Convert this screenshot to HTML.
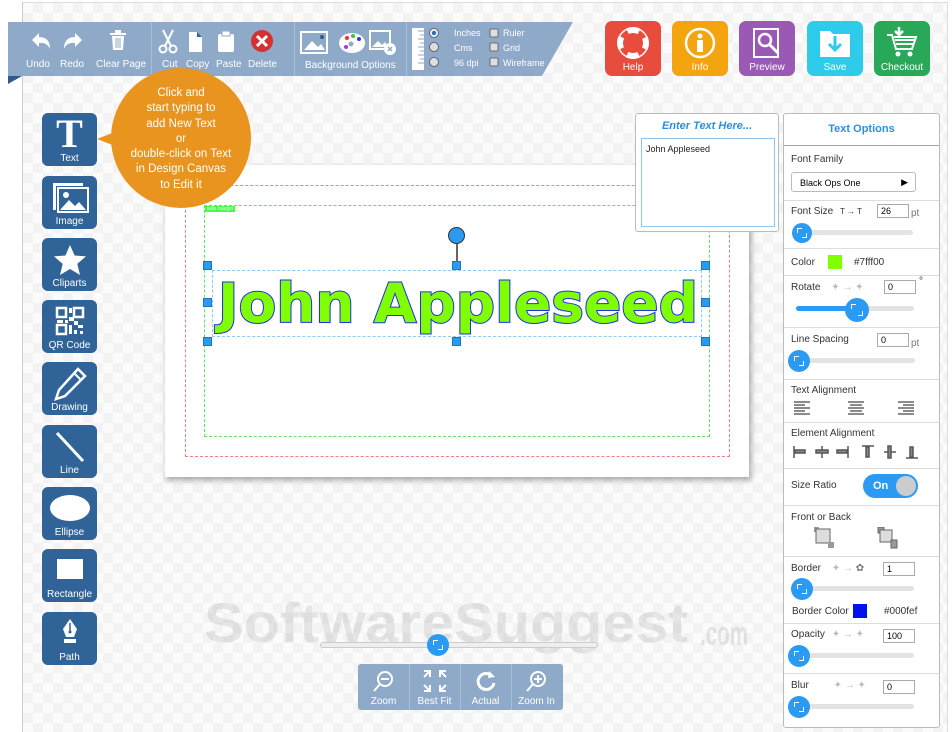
<!DOCTYPE html>
<html><head><meta charset="utf-8"><style>
*{box-sizing:border-box;margin:0;padding:0}
body{width:952px;height:724px;overflow:hidden;position:relative;font-family:"Liberation Sans",sans-serif;background:#fff}
.abs{position:absolute}
.bg{left:22px;top:2px;width:926px;height:730px;border-left:1px solid #ccc;border-top:1px solid #ddd;border-right:1px solid #ddd;
background-color:#f9f9f9;background-image:repeating-conic-gradient(#f3f3f3 0 25%,#fbfbfb 0 50%);background-size:20px 20px}
.tb{left:8px;top:22px;width:565px;height:54px;background:#8eaac8;clip-path:polygon(0 0,100% 0,94.5% 100%,0 100%)}
.tl{color:#fff;font-size:10px;position:absolute;text-align:center}
.sep{position:absolute;top:0;width:1px;height:54px;background:#a9bfd6}
.tool{position:absolute;left:42px;width:55px;height:53px;background:#306397;border-radius:6px;color:#fff;font-size:10px;text-align:center}
.tool span{position:absolute;left:0;right:0;bottom:2px}
.tool svg{position:absolute;left:50%;transform:translateX(-50%);top:5px}
.btn{position:absolute;top:21px;width:56px;height:55px;border-radius:7px;color:#fff;font-size:10px;text-align:center}
.btn span{position:absolute;left:0;right:0;bottom:3px}
.btn svg{position:absolute;left:50%;transform:translateX(-50%);top:6px}
.panel{left:783px;top:113px;width:157px;height:615px;background:#fff;border:1px solid #bbb;border-radius:3px}
.sec{position:absolute;left:0;width:155px;border-top:1px solid #ddd;font-size:10px;color:#333}
.lbl{position:absolute;left:7px;font-size:10px;color:#333}
.inp{position:absolute;width:32px;height:14px;border:1px solid #aaa;font-size:9px;padding-left:3px;line-height:12px;background:#fff}
.track{position:absolute;height:5px;background:#e3e3e3;border-radius:3px}
.knob{position:absolute;width:20px;height:20px;border-radius:50%;background:#2a9af2}
.knob:before{content:"";position:absolute;left:30%;top:30%;width:4px;height:4px;border-top:1.5px solid #fff;border-left:1.5px solid #fff;transform:translate(-1px,-1px)}
.knob:after{content:"";position:absolute;right:30%;bottom:30%;width:4px;height:4px;border-bottom:1.5px solid #fff;border-right:1.5px solid #fff;transform:translate(1px,1px)}
.h{position:absolute;width:9px;height:9px;background:#2a9af2;border:1px solid #2274b8}
</style></head><body>
<div class="abs bg"></div>

<!-- toolbar -->
<div class="abs" style="left:8px;top:76px;width:0;height:0;border-left:14px solid #2d5a8a;border-bottom:8px solid transparent"></div>
<div class="abs tb">
  <svg class="abs" style="left:20px;top:8px" width="80" height="24" viewBox="0 0 80 24"><path d="M4 10 L11 3 L11 7 Q22 7 22 19 Q19 12 11 13 L11 17 Z" fill="#fff"/><path d="M54 10 L47 3 L47 7 Q36 7 36 19 Q39 12 47 13 L47 17 Z" fill="#fff"/></svg>
  <svg class="abs" style="left:100px;top:6px" width="20" height="24"><rect x="2" y="5" width="16" height="2" fill="#fff"/><rect x="7" y="2" width="6" height="3" fill="#fff"/><path d="M4 8h12l-1 14H5z" fill="#fff"/><path d="M8 10v10M10 10v10M12 10v10" stroke="#8eaac8" stroke-width="1"/></svg>
  <div class="tl" style="left:18px;top:37px">Undo</div><div class="tl" style="left:52px;top:37px">Redo</div><div class="tl" style="left:88px;top:37px">Clear Page</div>
  <div class="sep" style="left:143px"></div>
  <svg class="abs" style="left:150px;top:6px" width="115" height="26"><g stroke="#fff" stroke-width="2" fill="none"><circle cx="5" cy="21" r="3.5"/><circle cx="15" cy="21" r="3.5"/><path d="M7 18L15 2M13 18L5 2"/></g>
  <path d="M31 4h8l5 5v15h-13z" fill="#fff"/><path d="M39 4v5h5" fill="#34659a"/>
  <rect x="60" y="6" width="16" height="18" rx="2" fill="#fff"/><rect x="64" y="3" width="8" height="5" fill="#fff" stroke="#8eaac8"/>
  <circle cx="104" cy="13" r="11" fill="#d63131"/><path d="M99 8l10 10M109 8l-10 10" stroke="#fff" stroke-width="3"/></svg>
  <div class="tl" style="left:154px;top:37px">Cut</div><div class="tl" style="left:178px;top:37px">Copy</div><div class="tl" style="left:208px;top:37px">Paste</div><div class="tl" style="left:240px;top:37px">Delete</div>
  <div class="sep" style="left:286px"></div>
  <svg class="abs" style="left:292px;top:8px" width="100" height="26"><rect x="1" y="2" width="26" height="21" fill="none" stroke="#fff" stroke-width="2"/><path d="M4 20l8-9 6 6 3-3 4 6z" fill="#fff"/><circle cx="22" cy="7" r="2" fill="#2d5a8a"/>
  <ellipse cx="52" cy="13" rx="13" ry="10" fill="#fff"/><circle cx="47" cy="8" r="2" fill="#e33"/><circle cx="53" cy="6" r="2" fill="#3c3"/><circle cx="59" cy="9" r="2" fill="#33e"/><circle cx="46" cy="17" r="2" fill="#a3e"/><circle cx="51" cy="14" r="2.5" fill="#8eaac8"/>
  <rect x="70" y="1" width="20" height="18" fill="none" stroke="#fff" stroke-width="2"/><path d="M72 17l6-6 4 4 3-3 3 5z" fill="#fff"/><circle cx="90" cy="19" r="6" fill="#fff"/><path d="M88 17l4 4M92 17l-4 4" stroke="#8eaac8" stroke-width="1.5"/></svg>
  <div class="tl" style="left:297px;top:38px">Background Options</div>
  <div class="sep" style="left:398px"></div>
  <svg class="abs" style="left:404px;top:6px" width="14" height="42"><rect x="0" y="0" width="12" height="42" fill="#fff"/><path d="M6 3h6M8 7h4M6 11h6M8 15h4M6 19h6M8 23h4M6 27h6M8 31h4M6 35h6" stroke="#8eaac8"/></svg>
  <svg class="abs" style="left:420px;top:5px" width="75" height="44"><g fill="#ddd" stroke="#555" stroke-width=".8"><circle cx="6" cy="6" r="4.5" fill="#eef"/><circle cx="6" cy="20" r="4.5"/><circle cx="6" cy="35" r="4.5"/><rect x="62" y="2" width="8" height="8" rx="1"/><rect x="62" y="16" width="8" height="8" rx="1"/><rect x="62" y="31" width="8" height="8" rx="1"/></g><circle cx="6" cy="6" r="2.2" fill="#2a6fc0"/></svg>
  <div class="tl" style="left:446px;top:6px;font-size:9px">Inches</div><div class="tl" style="left:446px;top:21px;font-size:9px">Cms</div><div class="tl" style="left:446px;top:36px;font-size:9px">96 dpi</div>
  <div class="tl" style="left:495px;top:6px;font-size:9px">Ruler</div><div class="tl" style="left:495px;top:21px;font-size:9px">Grid</div><div class="tl" style="left:495px;top:36px;font-size:9px">Wireframe</div>
</div>

<!-- right buttons -->
<div class="btn" style="left:605px;background:#e74c3c"><svg width="32" height="32"><circle cx="16" cy="16" r="13" fill="none" stroke="#fff" stroke-width="6" stroke-dasharray="12 8.4" stroke-dashoffset="6"/><circle cx="16" cy="16" r="15" fill="none" stroke="#fff" stroke-width="1.5"/></svg><span>Help</span></div>
<div class="btn" style="left:672px;background:#f3a40e"><svg width="32" height="32"><circle cx="16" cy="16" r="14" fill="none" stroke="#fff" stroke-width="2.5"/><circle cx="16" cy="9" r="2.5" fill="#fff"/><rect x="13" y="13" width="6" height="12" fill="#fff"/></svg><span>Info</span></div>
<div class="btn" style="left:739px;background:#9b59b6"><svg width="32" height="32"><rect x="3" y="2" width="24" height="28" fill="none" stroke="#fff" stroke-width="2"/><circle cx="14" cy="13" r="6" fill="none" stroke="#fff" stroke-width="2.5"/><path d="M18 17l9 9" stroke="#fff" stroke-width="3"/></svg><span>Preview</span></div>
<div class="btn" style="left:807px;background:#2ecbeb"><svg width="34" height="32"><path d="M2 4h10l3 3h17v23H2z" fill="#fff"/><path d="M17 9v14M11 17l6 6 6-6" stroke="#2ecbeb" stroke-width="3" fill="none"/></svg><span>Save</span></div>
<div class="btn" style="left:874px;background:#2aa85a"><svg width="34" height="32"><path d="M14 0v7M10 4l4 4 4-4" stroke="#fff" stroke-width="2.5" fill="none"/><path d="M2 8h5l4 14h16l4-12H9" stroke="#fff" stroke-width="2" fill="none"/><path d="M10 13h20M11 17h18" stroke="#fff" stroke-width="2"/><circle cx="13" cy="27" r="2.5" fill="#fff"/><circle cx="25" cy="27" r="2.5" fill="#fff"/></svg><span>Checkout</span></div>

<!-- left tools -->
<div class="tool" style="top:113px"><div style="position:absolute;left:0;right:0;top:0;font:bold 40px 'Liberation Serif',serif;line-height:42px">T</div><span>Text</span></div>
<div class="tool" style="top:176px"><svg width="40" height="34"><path d="M3 2h30v3H6v24H3z" fill="#fff"/><rect x="8" y="7" width="30" height="24" fill="none" stroke="#fff" stroke-width="2"/><path d="M10 29l9-10 6 6 4-4 7 8z" fill="#fff"/><circle cx="16" cy="14" r="3" fill="#fff"/></svg><span>Image</span></div>
<div class="tool" style="top:238px"><svg width="36" height="34"><path d="M18 2l4.6 10.5 11.4.9-8.7 7.5 2.7 11.1L18 26l-10 6 2.7-11.1L2 13.4l11.4-.9z" fill="#fff"/></svg><span>Cliparts</span></div>
<div class="tool" style="top:300px"><svg width="32" height="32"><g fill="none" stroke="#fff" stroke-width="2.5"><rect x="3" y="3" width="9" height="9"/><rect x="20" y="3" width="9" height="9"/><rect x="3" y="20" width="9" height="9"/></g><path d="M15 3h3v5h-3zM15 12h5v4h-5zM20 16h4v4h-4zM24 20h5v3h-5zM15 20h3v9h-3zM20 25h3v4h-3zM26 26h3v3h-3zM3 15h6v3H3zM11 15h3v3h-3z" fill="#fff"/></svg><span>QR Code</span></div>
<div class="tool" style="top:362px"><svg width="36" height="34"><path d="M26 2l7 7L13 29l-9 3 3-9z" fill="none" stroke="#fff" stroke-width="2.5"/><path d="M22 6l7 7" stroke="#fff" stroke-width="2"/></svg><span>Drawing</span></div>
<div class="tool" style="top:425px"><svg width="36" height="34"><path d="M5 3l26 28" stroke="#fff" stroke-width="3"/></svg><span>Line</span></div>
<div class="tool" style="top:487px"><svg width="44" height="34"><ellipse cx="22" cy="16" rx="20" ry="13" fill="#fff"/></svg><span>Ellipse</span></div>
<div class="tool" style="top:549px"><svg width="36" height="34"><rect x="5" y="5" width="26" height="20" fill="#fff"/></svg><span>Rectangle</span></div>
<div class="tool" style="top:612px"><svg width="30" height="36"><path d="M15 2l7 10-3 8h-8l-3-8z" fill="#fff"/><path d="M15 6v8" stroke="#306397" stroke-width="1.5"/><circle cx="15" cy="15" r="1.5" fill="#306397"/><rect x="9" y="22" width="12" height="4" fill="#fff"/></svg><span>Path</span></div>

<!-- canvas -->
<div class="abs" style="left:165px;top:165px;width:584px;height:312px;background:#fff;box-shadow:2px 3px 6px rgba(0,0,0,.35)"></div>
<div class="abs" style="left:185px;top:185px;width:545px;height:272px;border:1.5px dashed #f08080"></div>
<div class="abs" style="left:204px;top:205px;width:506px;height:232px;border:1.5px dashed #66e066"></div>
<div class="abs" style="left:205px;top:206px;background:#4f4;color:#fff;font-size:5px;padding:0 2px;line-height:6px">safe margin</div>
<div class="abs" style="left:212px;top:270px;width:490px;height:67px;border:1px dashed #8ccbf5"></div>
<div class="abs" style="left:456px;top:244px;width:1.5px;height:22px;background:#666"></div>
<div class="abs" style="left:448px;top:227px;width:17px;height:17px;border-radius:50%;background:#2a9af2;border:1.5px solid #333"></div>
<div class="h" style="left:203px;top:261px"></div><div class="h" style="left:452px;top:261px"></div><div class="h" style="left:701px;top:261px"></div>
<div class="h" style="left:203px;top:298px"></div><div class="h" style="left:701px;top:298px"></div>
<div class="h" style="left:203px;top:337px"></div><div class="h" style="left:452px;top:337px"></div><div class="h" style="left:701px;top:337px"></div>
<svg class="abs" style="left:212px;top:270px" width="492" height="68"><text x="246" y="52" text-anchor="middle" textLength="480" lengthAdjust="spacingAndGlyphs" font-family="DejaVu Sans" font-weight="bold" font-size="54" fill="#7fff00" stroke="#1f2ef0" stroke-width="2" paint-order="stroke">John Appleseed</text></svg>

<!-- bubble -->
<div class="abs" style="left:97px;top:132px;width:0;height:0;border-top:7px solid transparent;border-bottom:7px solid transparent;border-right:18px solid #e8941f"></div>
<div class="abs" style="left:111px;top:68px;width:140px;height:140px;border-radius:50%;background:#e8941f;color:#fff;font-size:11.5px;text-align:center;line-height:15.3px;padding-top:18px">Click and<br>start typing to<br>add New Text<br>or<br>double-click on Text<br>in Design Canvas<br>to Edit it</div>

<!-- enter text -->
<div class="abs" style="left:635px;top:113px;width:144px;height:119px;background:#fff;border:1px solid #bbb;border-radius:3px">
 <div style="text-align:center;color:#2a8fe8;font-style:italic;font-weight:bold;font-size:11px;margin-top:6px">Enter Text Here...</div>
 <div style="position:absolute;left:5px;top:24px;width:134px;height:89px;border:1.5px solid #8cc6f3;font-size:9px;padding:5px 4px;color:#222">John Appleseed</div>
</div>

<!-- text options panel -->
<div class="abs panel">
 <div style="height:32px;border-bottom:1.5px solid #6cb6f0;text-align:center;color:#2a8fe8;font-weight:bold;font-size:11px;line-height:31px">Text Options</div>
 <div class="lbl" style="top:40px">Font Family</div>
 <div class="abs" style="left:7px;top:58px;width:125px;height:20px;border:1px solid #bbb;border-radius:3px;font-size:9px;padding:5px 8px">Black Ops One<span style="position:absolute;right:7px;top:4px;font-size:9px">▶</span></div>
 <div class="sec" style="top:86px"></div>
 <div class="lbl" style="top:92px">Font Size <span style="font-size:8px;margin-left:4px">T → T</span></div>
 <div class="inp" style="left:93px;top:90px">26</div><div class="lbl" style="left:127px;top:94px;color:#777">pt</div>
 <div class="track" style="left:13px;top:116px;width:116px"></div><div class="knob" style="left:8px;top:109px"></div>
 <div class="sec" style="top:134px"></div>
 <div class="lbl" style="top:143px">Color</div><div class="abs" style="left:44px;top:141px;width:14px;height:14px;background:#7fff00"></div><div class="lbl" style="left:70px;top:143px">#7fff00</div>
 <div class="sec" style="top:161px"></div>
 <div class="lbl" style="top:168px">Rotate <span style="color:#bbb;margin-left:8px">✦ → ✦</span></div>
 <div class="inp" style="left:100px;top:166px">0</div><div class="lbl" style="left:135px;top:162px">°</div>
 <div class="track" style="left:12px;top:192px;width:118px;background:linear-gradient(90deg,#2a9af2 50%,#e3e3e3 50%)"></div><div class="knob" style="left:61px;top:184px;width:24px;height:24px"></div>
 <div class="sec" style="top:213px"></div>
 <div class="lbl" style="top:220px">Line Spacing</div><div class="inp" style="left:93px;top:219px">0</div><div class="lbl" style="left:127px;top:224px;color:#777">pt</div>
 <div class="track" style="left:13px;top:244px;width:118px"></div><div class="knob" style="left:4px;top:236px;width:22px;height:22px"></div>
 <div class="sec" style="top:265px"></div>
 <div class="lbl" style="top:271px">Text Alignment</div>
 <svg class="abs" style="left:8px;top:286px" width="125" height="16"><g stroke="#444" stroke-width="1.3"><path d="M2 2h16M2 5h11M2 8h16M2 11h11M2 14h16"/><path d="M56 2h16M58 5h12M56 8h16M58 11h12M56 14h16"/><path d="M106 2h16M111 5h11M106 8h16M111 11h11M106 14h16"/></g></svg>
 <div class="sec" style="top:308px"></div>
 <div class="lbl" style="top:314px">Element Alignment</div>
 <svg class="abs" style="left:8px;top:331px" width="130" height="14"><g stroke="#555" stroke-width="1.5" fill="#888"><path d="M2 1v12"/><rect x="3" y="5" width="10" height="3"/><path d="M30 1v12"/><rect x="24" y="5" width="12" height="3"/><path d="M56 1v12"/><rect x="45" y="5" width="10" height="3"/><path d="M70 1h12"/><rect x="74" y="2" width="3" height="10"/><path d="M92 7h12"/><rect x="96" y="1" width="3" height="12"/><path d="M114 13h12"/><rect x="118" y="2" width="3" height="10"/></g></svg>
 <div class="sec" style="top:354px"></div>
 <div class="lbl" style="top:366px">Size Ratio</div>
 <div class="abs" style="left:79px;top:360px;width:55px;height:24px;border-radius:12px;background:#2a9af2;color:#fff;font-weight:bold;font-size:11px;line-height:24px;padding-left:10px">On<div style="position:absolute;right:2px;top:2px;width:20px;height:20px;border-radius:50%;background:#ccc"></div></div>
 <div class="sec" style="top:391px"></div>
 <div class="lbl" style="top:398px">Front or Back</div>
 <svg class="abs" style="left:30px;top:413px" width="100" height="24"><rect x="0" y="0" width="5" height="5" fill="#999"/><rect x="2" y="2" width="14" height="14" fill="#ddd" stroke="#666"/><rect x="14" y="15" width="6" height="6" fill="#999"/><rect x="64" y="0" width="6" height="6" fill="#999" stroke="#666"/><rect x="66" y="3" width="12" height="12" fill="#ddd" stroke="#666"/><rect x="77" y="13" width="6" height="8" fill="#999" stroke="#666"/></svg>
 <div class="sec" style="top:442px"></div>
 <div class="lbl" style="top:449px">Border <span style="color:#bbb;margin-left:8px">✦ → <span style="color:#777">✿</span></span></div>
 <div class="inp" style="left:99px;top:448px">1</div>
 <div class="track" style="left:14px;top:472px;width:116px"></div><div class="knob" style="left:7px;top:464px;width:22px;height:22px"></div>
 <div class="lbl" style="left:8px;top:492px">Border Color</div><div class="abs" style="left:69px;top:490px;width:14px;height:14px;background:#0011ee"></div><div class="lbl" style="left:100px;top:492px">#000fef</div>
 <div class="sec" style="top:509px"></div>
 <div class="lbl" style="top:515px">Opacity <span style="color:#bbb;margin-left:4px">✦ → ✦</span></div>
 <div class="inp" style="left:99px;top:515px">100</div>
 <div class="track" style="left:13px;top:539px;width:117px"></div><div class="knob" style="left:4px;top:531px;width:22px;height:22px"></div>
 <div class="sec" style="top:559px"></div>
 <div class="lbl" style="top:566px">Blur <span style="color:#bbb;margin-left:22px">✦ → ✦</span></div>
 <div class="inp" style="left:99px;top:566px">0</div>
 <div class="track" style="left:13px;top:590px;width:117px"></div><div class="knob" style="left:4px;top:582px;width:22px;height:22px"></div>
</div>

<!-- watermark -->
<svg class="abs" style="left:200px;top:590px" width="560" height="70"><text x="4" y="52" textLength="484" lengthAdjust="spacingAndGlyphs" font-family="Liberation Sans" font-weight="bold" font-size="56" fill="rgba(150,150,150,.22)">SoftwareSuggest</text><text x="500" y="55" textLength="48" lengthAdjust="spacingAndGlyphs" font-family="Liberation Sans" font-weight="bold" font-size="34" fill="rgba(150,150,150,.22)">.com</text></svg>

<!-- zoom slider -->
<div class="track" style="left:320px;top:642px;width:278px;height:6px;border:1px solid #ccc;background:#eee"></div>
<div class="knob" style="left:427px;top:634px;width:22px;height:22px"></div>
<div class="abs" style="left:358px;top:664px;width:205px;height:46px;background:#8eaac8;border-radius:3px;color:#fff;font-size:9px">
 <div class="sep" style="left:51px;height:46px"></div><div class="sep" style="left:102px;height:46px"></div><div class="sep" style="left:153px;height:46px"></div>
 <svg class="abs" style="left:0;top:5px" width="205" height="26"><g stroke="#fff" stroke-width="2" fill="none"><circle cx="27" cy="10" r="7"/><path d="M23 10h8M22 15l-6 7"/><path d="M66 2h6v6M66 8l6-6M88 2h-6v6M88 8l-6-6M66 22h6v-6M66 16l6 6M88 22h-6v-6M88 16l-6 6"/><path d="M134 7a8 8 0 1 0 2 7" stroke-width="3"/><circle cx="180" cy="10" r="7"/><path d="M176 10h8M180 6v8M175 15l-6 7"/></g><path d="M131 2l6 6-7 1z" fill="#fff"/></svg>
 <div class="tl" style="left:0;width:51px;top:32px">Zoom</div><div class="tl" style="left:51px;width:51px;top:32px">Best Fit</div><div class="tl" style="left:102px;width:51px;top:32px">Actual</div><div class="tl" style="left:153px;width:51px;top:32px">Zoom In</div>
</div>
</body></html>
